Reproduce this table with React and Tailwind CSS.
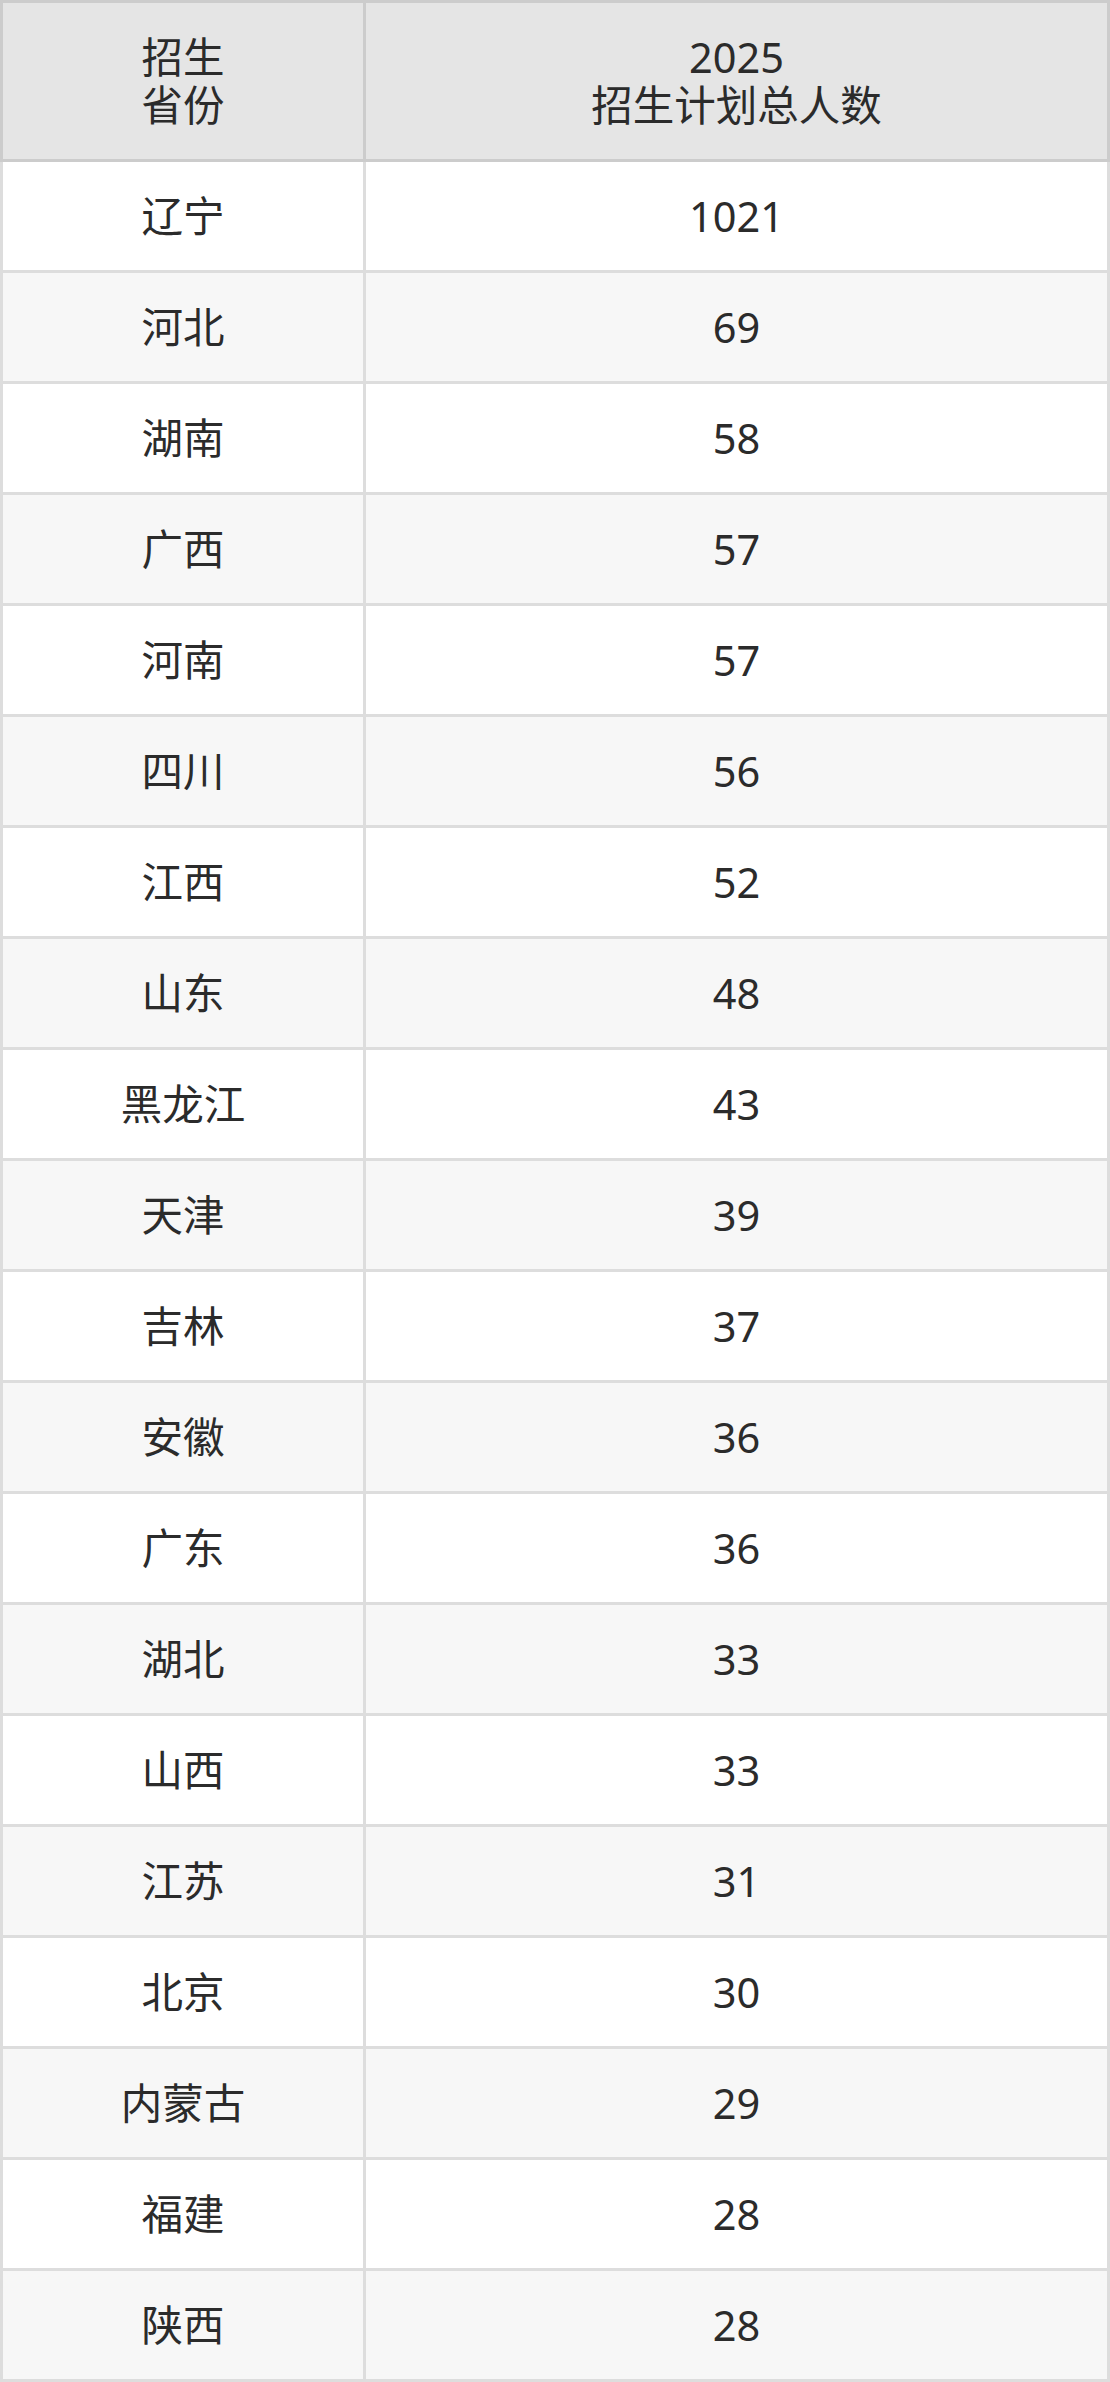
import React from "react";

const rows = [
  { province: "辽宁", total: 1021 },
  { province: "河北", total: 69 },
  { province: "湖南", total: 58 },
  { province: "广西", total: 57 },
  { province: "河南", total: 57 },
  { province: "四川", total: 56 },
  { province: "江西", total: 52 },
  { province: "山东", total: 48 },
  { province: "黑龙江", total: 43 },
  { province: "天津", total: 39 },
  { province: "吉林", total: 37 },
  { province: "安徽", total: 36 },
  { province: "广东", total: 36 },
  { province: "湖北", total: 33 },
  { province: "山西", total: 33 },
  { province: "江苏", total: 31 },
  { province: "北京", total: 30 },
  { province: "内蒙古", total: 29 },
  { province: "福建", total: 28 },
  { province: "陕西", total: 28 },
];

const App = () => {
  return (
    <div
      className="w-[1110px] bg-white text-[#2b2b2b] text-[41.5px] leading-[48px]"
      style={{ fontFamily: '"Noto Sans", "Noto Sans CJK SC", sans-serif' }}
    >
      {/* Header */}
      <div className="flex border-[3px] border-[#ccc] bg-[#e5e5e5] text-center">
        <div className="w-[363px] shrink-0 border-r-[3px] border-[#ccc] py-[30px]">
          <div>招生</div>
          <div>省份</div>
        </div>
        <div className="flex-1 py-[30px]">
          <div>2025</div>
          <div>招生计划总人数</div>
        </div>
      </div>

      {/* Rows */}
      {rows.map((row, idx) => (
        <div
          key={idx}
          className={
            "flex border-x-[3px] border-b-[3px] border-[#ddd] text-center " +
            (idx % 2 === 1 ? "bg-[#f7f7f7]" : "bg-white")
          }
        >
          <div className="w-[363px] shrink-0 border-r-[3px] border-[#ddd] py-[30px]">
            {row.province}
          </div>
          <div className="flex-1 py-[30px]">{row.total}</div>
        </div>
      ))}
    </div>
  );
};

export default App;
